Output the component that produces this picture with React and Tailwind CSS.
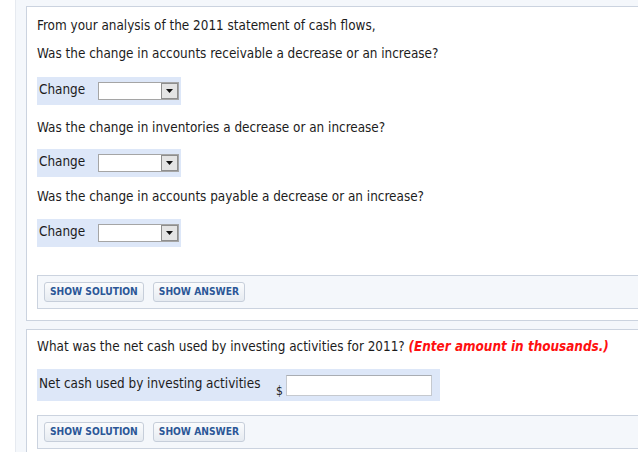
import React from "react";

const font = { fontFamily: '"DejaVu Sans Condensed", "DejaVu Sans", Tahoma, sans-serif' };

// fake select box like old IE
function Select() {
  return (
    <div className="w-[81px] h-[18px] bg-white border border-[#a5a5a5] flex justify-end">
      <div className="w-[17px] h-[16px] border border-[#8e8e8e] bg-[#e4e4e4] flex items-center justify-center">
        <svg width="7" height="4" viewBox="0 0 7 4">
          <path d="M0 0h7L3.5 4z" fill="#111" />
        </svg>
      </div>
    </div>
  );
}

function ChangeRow() {
  return (
    <div className="w-[144px] h-[28px] bg-[#dde7f8] flex items-center pl-[2px]">
      <span className="w-[59px] -mt-[2px]">Change</span>
      <Select />
    </div>
  );
}

function ButtonBar() {
  return (
    <div className="h-[34px] border border-[#cbd3df] bg-[#f4f7fb] flex items-center gap-[9px] pl-[6px]">
      <button className="h-[20px] px-[5px] rounded-[3px] border border-[#c6ceda] bg-gradient-to-b from-[#fbfcfd] to-[#e6ebf1] text-[10.2px] font-bold text-[#2b5797] leading-none">
        SHOW SOLUTION
      </button>
      <button className="h-[20px] px-[5px] rounded-[3px] border border-[#c6ceda] bg-gradient-to-b from-[#fbfcfd] to-[#e6ebf1] text-[10.2px] font-bold text-[#2b5797] leading-none">
        SHOW ANSWER
      </button>
    </div>
  );
}

export default function App() {
  return (
    <div className="w-[638px] h-[452px] overflow-hidden bg-white flex text-[13.4px] text-[#1c1c1c]" style={font}>
      <div className="w-[15px] shrink-0" />
      <div className="flex-1 border-l border-[#e6eaf0] bg-[#f4f7fb] pl-[10px] pt-[6px]">
        <div className="w-[680px] flex flex-col gap-[8px]">
          {/* first question card */}
          <div className="bg-white border border-[#cbd3df] pl-[10px] pt-[9px] pb-[11px]">
            <p className="h-[26px] leading-[20px]">From your analysis of the 2011 statement of cash flows,</p>
            <p className="h-[26px] leading-[24px]">Was the change in accounts receivable a decrease or an increase?</p>
            <div className="mt-[9px]">
              <ChangeRow />
            </div>
            <p className="mt-[11px] h-[24px] leading-[24px]">Was the change in inventories a decrease or an increase?</p>
            <div className="mt-[9px]">
              <ChangeRow />
            </div>
            <p className="mt-[8px] h-[24px] leading-[24px]">Was the change in accounts payable a decrease or an increase?</p>
            <div className="mt-[10px]">
              <ChangeRow />
            </div>
            <div className="mt-[28px]">
              <ButtonBar />
            </div>
          </div>

          {/* second question card */}
          <div className="bg-white border border-[#cbd3df] pl-[10px] pt-[7px] pb-[10px]">
            <p className="h-[24px] leading-[20px]">
              What was the net cash used by investing activities for 2011?{" "}
              <span className="text-[#ff1010] font-bold italic">(Enter amount in thousands.)</span>
            </p>
            <div className="mt-[8px] w-[403px] h-[32px] bg-[#dde7f8] flex items-center pl-[2px]">
              <span className="w-[237px] -mt-[2px]">Net cash used by investing activities</span>
              <span className="mt-[12px] w-[10px] text-[12px]">$</span>
              <div className="w-[146px] h-[21px] bg-white border border-[#c5c9cf] border-t-[#a9adb3]" />
            </div>
            <div className="mt-[14px]">
              <ButtonBar />
            </div>
          </div>
        </div>
      </div>
    </div>
  );
}
